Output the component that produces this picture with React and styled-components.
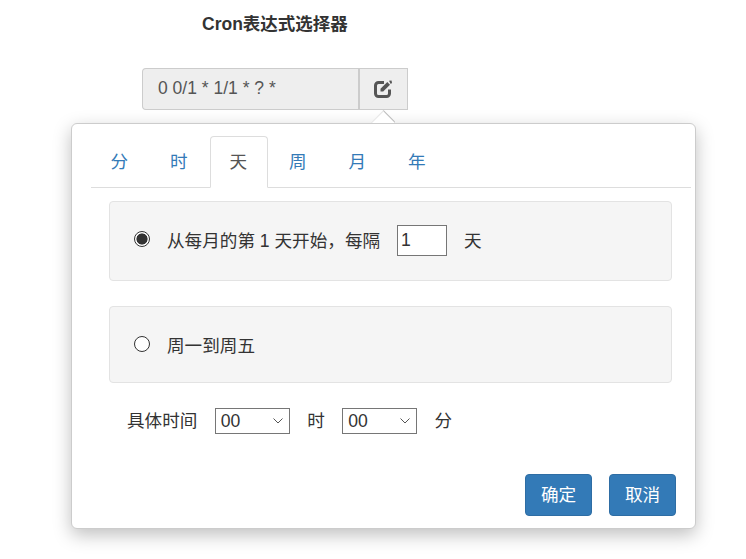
import React from "react";
import styled, { createGlobalStyle } from "styled-components";

const GlobalStyle = createGlobalStyle`
html, body {
  margin: 0;
  padding: 0;
  background: #fff;
}
* {
  box-sizing: border-box;
}
body {
  font-family: "Liberation Sans", "Noto Sans CJK SC", sans-serif;
  font-size: 17.6px;
  color: #333;
}
`;

const Page = styled.div`
position: relative;
width: 746px;
height: 559px;
overflow: hidden;
`;

const Title = styled.h1`
margin: 0;
padding: 12px 0 0 202px;
height: 68px;
font-size: 17.5px;
line-height: 25px;
font-weight: 700;
color: #333;
`;

const InputGroup = styled.div`
display: flex;
width: 266px;
height: 42px;
margin-left: 142px;
`;

const CronInput = styled.div`
flex: 1;
padding: 0 15px;
line-height: 38px;
font-size: 17.5px;
color: #555;
background: #eee;
border: 1px solid #ccc;
border-right: 2px solid #ccc;
border-radius: 4px 0 0 4px;
`;

const Addon = styled.div`
display: flex;
align-items: center;
justify-content: center;
width: 48px;
background: #eee;
border: 1px solid #ccc;
border-left: 0;
color: #555;
`;

const Popover = styled.div`
position: absolute;
left: 71px;
top: 123px;
width: 625px;
height: 406px;
padding: 12px 4px 0 19px;
background: #fff;
border: 1px solid #ccc;
border-radius: 6px;
box-shadow: 0 6px 18px rgba(0, 0, 0, 0.25);
`;

const Arrow = styled.span`
position: absolute;
left: 298px;
top: -14px;
width: 25px;
height: 13px;
overflow: hidden;

&::before {
  content: "";
  position: absolute;
  left: 3.5px;
  top: 3.5px;
  width: 18px;
  height: 18px;
  background: #fff;
  border-top: 1px solid #bbb;
  border-left: 1px solid #e6e6e6;
  transform: rotate(45deg);
}
`;

const Tabs = styled.ul`
display: flex;
gap: 2px;
height: 52px;
margin: 0;
padding: 0;
list-style: none;
border-bottom: 1px solid #ddd;
`;

const Tab = styled.li`
flex: none;
width: 57.5px;
height: 52px;
padding-right: 1px;
line-height: 50px;
text-align: center;
font-size: 17.6px;
color: ${(p) => (p.$active ? "#555" : "#337ab7")};
background: ${(p) => (p.$active ? "#fff" : "transparent")};
border: 1px solid ${(p) => (p.$active ? "#ddd" : "transparent")};
border-bottom-color: ${(p) => (p.$active ? "#fff" : "transparent")};
border-radius: 4px 4px 0 0;
`;

const Well = styled.div`
display: flex;
align-items: center;
gap: 17px;
height: ${(p) => p.$height}px;
margin: ${(p) => p.$top}px 19px 0 18px;
padding: ${(p) => p.$shift || 0}px 24px 0;
background: #f5f5f5;
border: 1px solid #e3e3e3;
border-radius: 4px;
`;

const Radio = styled.input.attrs({ type: "radio" })`
appearance: none;
flex: none;
width: 16px;
height: 16px;
margin: 0 0 5px;
background: #fff;
border: 1px solid #333;
border-radius: 50%;

&:checked {
  background: radial-gradient(circle, #333 0 5.2px, #fff 5.9px);
}
`;

const Label = styled.span`
font-size: 17.6px;
line-height: 25px;
color: #333;
`;

const NumberInput = styled.input`
width: 50px;
height: 31px;
margin: 0 0 2px;
padding: 0 3px;
font-family: inherit;
font-size: 17.6px;
color: #333;
background: #fff;
border: 1px solid #767676;
`;

const TimeRow = styled.div`
display: flex;
align-items: center;
gap: 17.4px;
height: 26px;
margin: 25px 0 0 36px;
`;

const Select = styled.select`
appearance: none;
flex: none;
width: 75px;
height: 26px;
padding: 0 0 0 5px;
font-family: inherit;
font-size: 17.6px;
color: #333;
background: #fff url("data:image/svg+xml,%3Csvg xmlns='http://www.w3.org/2000/svg' width='10' height='6'%3E%3Cpath d='M.5.5l4.500 4.500L9.500.5' fill='none' stroke='%23555'/%3E%3C/svg%3E") no-repeat right 6px center;
border: 1px solid #767676;
border-radius: 0;
`;

const Footer = styled.div`
display: flex;
justify-content: flex-end;
gap: 17px;
margin: 40px 15px 0 0;
`;

const Button = styled.button`
width: 67px;
height: 42px;
padding: 0 0 3px;
font-family: inherit;
font-size: 17.6px;
color: #fff;
background: #337ab7;
border: 1px solid #2e6da4;
border-radius: 4px;
`;

const EditIcon = () => (
  <svg width="19" height="18" viewBox="0 0 19 18" fill="none" stroke="#555">
    <path d="M10 2.500H4.500a3 3 0 0 0-3 3v8a3 3 0 0 0 3 3h8a3 3 0 0 0 3-3V9.500" strokeWidth="3" />
    <path d="M6.500 11.500V8.800L13.300 2l2.700 2.700-6.800 6.800z" fill="#555" stroke="none" />
    <path d="M15 .8l2.500-.3.500 2.500-1.300 1z" fill="#555" stroke="none" />
  </svg>
);

const TAB_NAMES = ["分", "时", "天", "周", "月", "年"];

export default function App() {
  return (
    <Page>
      <GlobalStyle />
      <Title>Cron表达式选择器</Title>
      <InputGroup>
        <CronInput>0 0/1 * 1/1 * ? *</CronInput>
        <Addon>
          <EditIcon />
        </Addon>
      </InputGroup>
      <Popover>
        <Arrow />
        <Tabs>
          {TAB_NAMES.map((name) => (
            <Tab key={name} $active={name === "天"}>
              {name}
            </Tab>
          ))}
        </Tabs>
        <Well $height={80} $top={13}>
          <Radio name="day" defaultChecked />
          <Label>从每月的第 1 天开始，每隔</Label>
          <NumberInput defaultValue="1" />
          <Label>天</Label>
        </Well>
        <Well $height={77} $top={25} $shift={3}>
          <Radio name="day" />
          <Label>周一到周五</Label>
        </Well>
        <TimeRow>
          <Label>具体时间</Label>
          <Select defaultValue="00">
            <option>00</option>
          </Select>
          <Label>时</Label>
          <Select defaultValue="00">
            <option>00</option>
          </Select>
          <Label>分</Label>
        </TimeRow>
        <Footer>
          <Button>确定</Button>
          <Button>取消</Button>
        </Footer>
      </Popover>
    </Page>
  );
}
